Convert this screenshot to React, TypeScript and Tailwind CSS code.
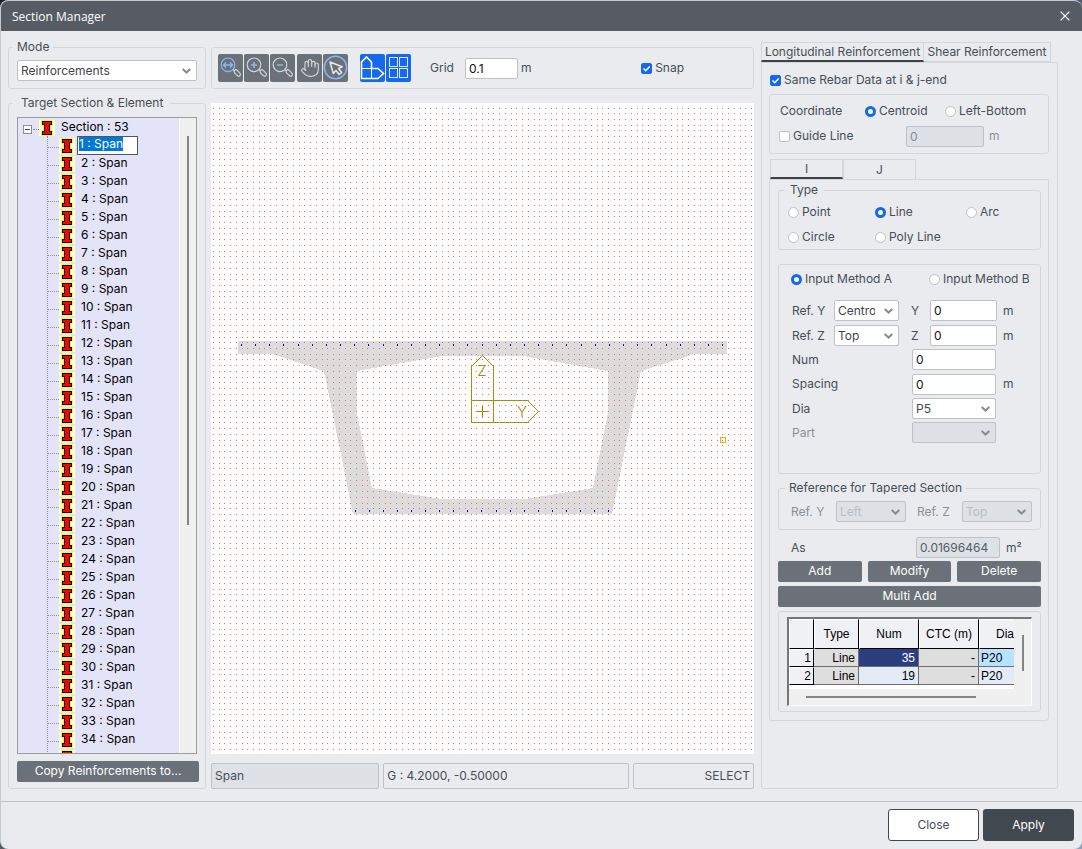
import { useState } from 'react';
import type { ReactNode } from 'react';
import clsx from 'clsx';
import { Hand, X } from 'lucide-react';

const SPAN_COUNT = 34;

// Canvas scale: pixels for one 0.1 m grid step
const GRID_STEP = 5.726;
const VIEW = { x: -271, y: -308, width: 543, height: 651 };

function buildGridPath() {
  let d = '';
  for (let i = -47; i <= 47; i++) {
    for (let j = -53; j <= 59; j++) {
      d += `M${Math.round(i * GRID_STEP)} ${Math.round(j * GRID_STEP)}h1v1h-1z`;
    }
  }
  return d;
}

const GRID_PATH = buildGridPath();

const REBARS = [
  ...Array.from({ length: 35 }, (_, i) => ({ x: Math.round(-241 + i * 14.15), y: -67 })),
  ...Array.from({ length: 19 }, (_, i) => ({ x: Math.round(-127 + i * 14.05), y: 99 })),
];

const BOX = 'rounded-[3px] border border-[#d3d6da]';

interface GroupProps {
  title: string;
  className?: string;
  legendClassName?: string;
  children: ReactNode;
}

function Group({ title, className, legendClassName, children }: GroupProps) {
  return (
    <fieldset className={clsx(BOX, 'min-w-0', className)}>
      <legend className={clsx('h-5 leading-5', legendClassName)}>{title}</legend>
      {children}
    </fieldset>
  );
}

interface SelectProps {
  label: string;
  options: string[];
  className?: string;
  disabled?: boolean;
}

function Select({ label, options, className, disabled }: SelectProps) {
  return (
    <div className={clsx('grid items-center', className)}>
      <select
        aria-label={label}
        disabled={disabled}
        className="col-start-1 row-start-1 h-[21px] w-full appearance-none rounded-[2px] border border-[#bcc2c8] bg-white pr-[23px] pl-[3px] leading-[19px] text-[#3f464d] disabled:bg-[#dee1e5] disabled:text-[#b9bec4] disabled:opacity-100"
      >
        {options.map((o) => (
          <option key={o}>{o}</option>
        ))}
      </select>
      <svg className="pointer-events-none col-start-1 row-start-1 mr-[5px] justify-self-end" width="11" height="8" viewBox="0 0 11 8" fill="none">
        <path d="M1.7 2l3.8 3.6L9.3 2" stroke="#868d94" strokeWidth="2" />
      </svg>
    </div>
  );
}

interface TextBoxProps {
  label: string;
  value: string;
  className?: string;
  disabled?: boolean;
  readOnly?: boolean;
}

function TextBox({ label, value, className, disabled, readOnly }: TextBoxProps) {
  return (
    <input
      type="text"
      aria-label={label}
      defaultValue={value}
      disabled={disabled}
      readOnly={readOnly}
      className={clsx(
        'h-[21px] min-w-0 rounded-[2px] border border-[#bcc2c8] px-[3px]',
        disabled && 'bg-[#dee1e5] text-[#868d94]',
        readOnly && 'bg-[#dee1e5] text-[#555c64]',
        !disabled && !readOnly && 'bg-white text-[#111]',
        className
      )}
    />
  );
}

interface RadioProps {
  name: string;
  label: string;
  defaultChecked?: boolean;
  className?: string;
}

function Radio({ name, label, defaultChecked, className }: RadioProps) {
  return (
    <label className={clsx('flex items-center gap-[3px] whitespace-nowrap', className)}>
      <input
        type="radio"
        name={name}
        defaultChecked={defaultChecked}
        className="size-[11px] shrink-0 appearance-none rounded-full border border-[#bcc2c8] bg-white checked:border-[3px] checked:border-[#1668ec]"
      />
      {label}
    </label>
  );
}

interface CheckProps {
  label: string;
  defaultChecked?: boolean;
  className?: string;
}

function Check({ label, defaultChecked, className }: CheckProps) {
  return (
    <label className={clsx('flex items-center gap-[3px] whitespace-nowrap', className)}>
      <span className="grid shrink-0 place-items-center">
        <input
          type="checkbox"
          defaultChecked={defaultChecked}
          className="peer col-start-1 row-start-1 size-[11px] appearance-none rounded-[2px] border border-[#bcc2c8] bg-white checked:border-[#1668ec] checked:bg-[#1668ec]"
        />
        <svg className="pointer-events-none invisible col-start-1 row-start-1 peer-checked:visible" width="9" height="9" viewBox="0 0 9 9" fill="none">
          <path d="M1.5 4.5l2.2 2.2L7.7 2.5" stroke="#fff" strokeWidth="1.6" />
        </svg>
      </span>
      {label}
    </label>
  );
}

function BeamIcon() {
  return (
    <span className="flex h-4 w-4 shrink-0 justify-center bg-white">
      <svg width="12" height="16" viewBox="0 0 12 16" shapeRendering="crispEdges">
        <path d="M0 0h12v6h-2v4h2v6H0v-6h2V6H0z" fill="#ffff00" />
        <path d="M1 1h10v4H9v6h2v4H1v-4h2V5H1z" fill="#000" />
        <path d="M2 2h8v2H8v8h2v2H2v-2h2V4H2z" fill="#ff0000" />
      </svg>
    </span>
  );
}

function MagnifierIcon({ kind }: { kind: 'fit' | 'in' | 'out' }) {
  return (
    <svg width="25" height="28" viewBox="0 0 25 28" fill="none" stroke="#d0d4d8" strokeWidth="1.2">
      <circle cx="10" cy="10.800" r="6.800" stroke={kind === 'fit' ? '#8db4f0' : '#d0d4d8'} />
      <path d="M15 15.500l1.500 1.500" />
      <rect x="15.500" y="17.200" width="7.500" height="3.600" rx="1.800" transform="rotate(45 19.250 19)" />
      {kind === 'fit' && <path d="M5.500 11h9M8 8.500L5.500 11 8 13.500M12 8.500l2.500 2.500-2.500 2.500" stroke="#8db4f0" strokeWidth="1.500" />}
      {kind === 'in' && <path d="M7 11h6M10 8v6" stroke="#8db4f0" strokeWidth="1.600" />}
      {kind === 'out' && <path d="M7 11h6" stroke="#8db4f0" strokeWidth="1.600" />}
    </svg>
  );
}

function PointerIcon() {
  return (
    <svg width="25" height="28" viewBox="0 0 25 28" fill="none">
      <circle cx="12.500" cy="13.500" r="11.200" stroke="#8db4f0" strokeWidth="1.500" />
      <path d="M7 8l3.300 11.500 2.700-3 3.200 4 2.500-2-3.200-4 3.700-1.700z" stroke="#e6e8ea" strokeWidth="1.500" strokeLinejoin="round" />
    </svg>
  );
}

function AxisIcon() {
  return (
    <svg width="25" height="28" viewBox="0 0 25 28" fill="none" stroke="#fff">
      <path d="M1.500 24.500V8l5-5 5 5v6.500H18l5.500 5-5.500 5z" strokeWidth="1.600" />
      <path d="M1.500 14.500h10v10" strokeWidth="1" />
    </svg>
  );
}

function GridIcon() {
  return (
    <svg width="25" height="28" viewBox="0 0 25 28" fill="none" stroke="#dbe7fd" strokeWidth="1">
      <rect x="3.500" y="3.500" width="8" height="9" />
      <rect x="13.500" y="3.500" width="8" height="9" />
      <rect x="3.500" y="14.500" width="8" height="9" />
      <rect x="13.500" y="14.500" width="8" height="9" />
    </svg>
  );
}

function ToolButton({ label, active, children }: { label: string; active?: boolean; children: ReactNode }) {
  return (
    <button
      type="button"
      aria-label={label}
      className={clsx('flex h-7 w-[25px] items-center justify-center rounded-[2px]', active ? 'bg-[#1668ec]' : 'bg-[#6a7178]')}
    >
      {children}
    </button>
  );
}

function ActionButton({ children, className }: { children: ReactNode; className?: string }) {
  return (
    <button type="button" className={clsx('h-[21px] rounded-[2px] bg-[#6a7178] pb-px text-white', className)}>
      {children}
    </button>
  );
}

function ElementTree() {
  return (
    <div className="mr-0.5 flex min-h-0 flex-1 basis-0 overflow-hidden border border-[#9c9c9c] bg-[#e4e4f8] text-black">
      <div className="min-w-0 flex-1 pl-[5px]">
        <div className="flex h-[18px] items-center">
          <button type="button" aria-label="Collapse" className="mt-1 flex size-[9px] items-center justify-center border border-[#919191] bg-white">
            <span className="h-px w-[5px] bg-[#31479b]" />
          </button>
          <span className="mt-1 ml-px w-[6px] border-t border-dotted border-[#909090]" />
          <span className="pt-0.5">
            <BeamIcon />
          </span>
          <span className="pl-[6px] leading-[18px]">Section : 53</span>
        </div>
        <ul className="ml-6 border-l border-dotted border-[#909090]">
          {Array.from({ length: SPAN_COUNT }, (_, i) => (
            <li key={i} className="flex h-[18px] items-center">
              <span className="mt-1 w-[11px] border-t border-dotted border-[#909090]" />
              <span className="pt-0.5">
                <BeamIcon />
              </span>
              {i === 0 ? (
                <input
                  type="text"
                  aria-label="Element name"
                  autoFocus
                  onFocus={(e) => e.target.select()}
                  defaultValue="1 : Span"
                  className="ml-0.5 h-[19px] w-[61px] shrink-0 border border-[#555] bg-white px-px pb-[3px] leading-4 outline-none selection:bg-[#0078d7] selection:text-white"
                />
              ) : (
                <span className="pl-1.5 leading-[18px] whitespace-nowrap">{i + 1} : Span</span>
              )}
            </li>
          ))}
          <li className="h-[18px] pt-0.5 pl-[11px]">
            <BeamIcon />
          </li>
        </ul>
      </div>
      <div className="w-[17px] shrink-0 border-l border-white bg-[#f0f0f0] pt-[18px]">
        <div className="mx-auto h-[63%] w-0.5 bg-[#858585]" />
      </div>
    </div>
  );
}

function SectionCanvas() {
  return (
    <div className="min-h-0 flex-1 basis-0 bg-white">
      <svg
        className="block h-full w-full"
        viewBox={`${VIEW.x} ${VIEW.y} ${VIEW.width} ${VIEW.height}`}
        preserveAspectRatio="xMidYMid slice"
        shapeRendering="crispEdges"
      >
        <path
          fillRule="evenodd"
          fill="#dcdcdc"
          d="M-244-70H245V-57H213L159-40L130 103H-129L-158-40L-210-57H-244z M-40-55L-125-40V2L-110 77L-40 88H43L111 77L126 2V-40L41-55z"
        />
        {/* local axes */}
        <g fill="none" stroke="#999100">
          <path d="M-10.500 11.500V-44.500L.5-55.500L11.500-44.500V11.500" />
          <path d="M-10.500-10.500H45.500L56.500.5L45.500 11.500H-10.500" />
          <path d="M-5 .5H6M.5-5V6" />
        </g>
        <g fill="#999100" fontFamily="Inter, sans-serif" fontWeight="300" fontSize="15" textAnchor="middle">
          <text x="0" y="-35">Z</text>
          <text x="40" y="6">Y</text>
        </g>
        <path d={GRID_PATH} fill="#f46a6a" />
        {REBARS.map((r) => (
          <rect key={`${r.x},${r.y}`} x={r.x} y={r.y} width="1" height="2" fill="#0000e0" />
        ))}
        <rect x="238.500" y="26.500" width="5" height="5" fill="none" stroke="#ffaa00" />
      </svg>
    </div>
  );
}

const ROWS = [
  { type: 'Line', num: 35, ctc: '-', dia: 'P20' },
  { type: 'Line', num: 19, ctc: '-', dia: 'P20' },
];

function RebarTable() {
  const [selected, setSelected] = useState(0);
  const head = 'border border-t-white border-r-black border-b-black border-l-white bg-[#f0f1f5] p-0 font-normal';
  const cell = 'border-r border-b border-[#6e6e6e] p-0';

  return (
    <div className="border-t-2 border-r border-b border-l-2 border-t-[#777] border-r-white border-b-white border-l-[#777] bg-[#f0f0f0] font-['Liberation_Sans',Arial,sans-serif] text-black">
      <div className="flex">
        <div className="min-w-0 flex-1 overflow-hidden bg-white pb-1">
          <table className="w-[242px] table-fixed border-separate border-spacing-0">
            <colgroup>
              <col className="w-[25px]" />
              <col className="w-[45px]" />
              <col className="w-[60px]" />
              <col className="w-[60px]" />
              <col className="w-[52px]" />
            </colgroup>
            <thead>
              <tr className="h-[30px]">
                <th className={head} aria-label="Row" />
                <th className={head}>Type</th>
                <th className={head}>Num</th>
                <th className={head}>CTC (m)</th>
                <th className={head}>Dia</th>
              </tr>
            </thead>
            <tbody>
              {ROWS.map((row, i) => (
                <tr key={i} className="h-[18px] text-right leading-4" onClick={() => setSelected(i)}>
                  <th className={clsx(head, 'pr-0.5 text-right')}>{i + 1}</th>
                  <td className={clsx(cell, 'bg-[#dedede] pr-[3px]')}>{row.type}</td>
                  <td className={clsx(cell, 'pr-[3px]', i === selected ? 'bg-[#2b3f80] text-white' : 'bg-[#e3ebf7]')}>{row.num}</td>
                  <td className={clsx(cell, 'bg-[#dedede] pr-[3px]')}>{row.ctc}</td>
                  <td className={clsx(cell, 'pl-0.5 text-left', i === selected ? 'bg-[#b8e2ff]' : 'bg-[#e3ebf7]')}>{row.dia}</td>
                </tr>
              ))}
            </tbody>
          </table>
        </div>
        <div className="w-[17px] shrink-0 pt-4">
          <div className="mx-auto h-9 w-0.5 bg-[#858585]" />
        </div>
      </div>
      <div className="flex h-4 items-center pr-[55px] pl-[17px]">
        <div className="h-0.5 flex-1 bg-[#858585]" />
      </div>
    </div>
  );
}

function ReinforcementPanel() {
  const [end, setEnd] = useState('I');

  return (
    <div className="flex w-[297px] shrink-0 flex-col">
      <div role="tablist" className="mt-[5px] flex h-5">
        <button type="button" role="tab" aria-selected="true" className="w-[163px] border border-b-2 border-[#d3d6da] border-b-[#3c4248] whitespace-nowrap">
          Longitudinal Reinforcement
        </button>
        <button type="button" role="tab" aria-selected="false" className="w-[127px] border border-l-0 border-[#d3d6da] whitespace-nowrap">
          Shear Reinforcement
        </button>
      </div>
      <div className="flex-1 rounded-b-[3px] border border-[#d3d6da] pr-2 pl-[7px]">
        <Check label="Same Rebar Data at i & j-end" defaultChecked className="mt-[7px] h-5 pl-px" />

        <div className={clsx(BOX, 'mt-1 h-[60px] pt-1.5 pl-[10px]')}>
          <div className="flex h-5 items-center">
            <span className="w-[85px]">Coordinate</span>
            <Radio name="coordinate" label="Centroid" defaultChecked className="w-20" />
            <Radio name="coordinate" label="Left-Bottom" />
          </div>
          <div className="mt-[5px] -ml-px flex h-5 items-center">
            <Check label="Guide Line" className="w-[127px]" />
            <TextBox label="Guide line position" value="0" disabled className="w-[78px]" />
            <span className="pl-[5px] text-[#8a9097]">m</span>
          </div>
        </div>

        <div role="tablist" className="mt-[5px] ml-px flex h-5">
          {['I', 'J'].map((t) => (
            <button
              key={t}
              type="button"
              role="tab"
              aria-selected={end === t}
              onClick={() => setEnd(t)}
              className={clsx('w-[73px] border border-b-0 border-[#d3d6da]', end === t && 'border-b-2 border-b-[#3c4248]')}
            >
              {t}
            </button>
          ))}
        </div>
        <div className={clsx(BOX, 'rounded-t-none pr-[7px] pb-2 pl-2')}>
          <Group title="Type" legendClassName="-ml-1 px-1.5" className="h-[70px] pl-[9px]">
            <div className="mt-0.5 grid grid-cols-[87px_91px_1fr] gap-y-[5px] leading-5">
              <Radio name="type" label="Point" />
              <Radio name="type" label="Line" defaultChecked />
              <Radio name="type" label="Arc" />
              <Radio name="type" label="Circle" />
              <Radio name="type" label="Poly Line" />
            </div>
          </Group>

          <div className={clsx(BOX, 'mt-[14px] h-[210px] pt-1 pl-3')}>
            <div className="flex h-5 items-center">
              <Radio name="method" label="Input Method A" defaultChecked className="w-[138px]" />
              <Radio name="method" label="Input Method B" />
            </div>
            <div className="mt-[11px] flex flex-col gap-1 pl-px">
              {[
                { axis: 'Y', options: ['Centroid', 'Left', 'Right'] },
                { axis: 'Z', options: ['Top', 'Centroid', 'Bottom'] },
              ].map(({ axis, options }) => (
                <div key={axis} className="flex h-[21px] items-center">
                  <span className="w-[42px]">Ref. {axis}</span>
                  <Select label={`Ref. ${axis}`} options={options} className="w-[65px]" />
                  <span className="w-[31px] pl-3">{axis}</span>
                  <TextBox label={axis} value="0" className="w-[67px]" />
                  <span className="pl-1.5">m</span>
                </div>
              ))}
            </div>
            <div className="mt-[3px] flex flex-col gap-[3px] pl-px">
              <div className="flex h-[21px] items-center">
                <span className="w-[120px]">Num</span>
                <TextBox label="Num" value="0" className="w-[84px]" />
              </div>
              <div className="flex h-[22px] items-center">
                <span className="w-[120px]">Spacing</span>
                <TextBox label="Spacing" value="0" className="w-[84px]" />
                <span className="pl-[7px]">m</span>
              </div>
              <div className="flex h-[21px] items-center">
                <span className="w-[120px]">Dia</span>
                <Select label="Dia" options={['P5', 'P20']} className="w-[84px]" />
              </div>
              <div className="flex h-[21px] items-center">
                <span className="w-[120px] text-[#8a9097]">Part</span>
                <Select label="Part" options={['']} disabled className="w-[84px]" />
              </div>
            </div>
          </div>

          <Group title="Reference for Tapered Section" legendClassName="-ml-1.5 px-1" className="mt-1 h-[52px] pl-3">
            <div className="mt-[3px] flex h-[21px] items-center text-[#8a9097]">
              <span className="w-[45px]">Ref. Y</span>
              <Select label="Tapered Ref. Y" options={['Left']} disabled className="w-[70px]" />
              <span className="w-14 pl-[11px]">Ref. Z</span>
              <Select label="Tapered Ref. Z" options={['Top']} disabled className="w-[70px]" />
            </div>
          </Group>

          <div className="mt-[7px] flex h-[21px] items-center pl-[13px]">
            <span className="w-[125px]">As</span>
            <TextBox label="As" value="0.01696464" readOnly className="w-[84px]" />
            <span className="pl-1.5">m²</span>
          </div>

          <div className="mt-[3px] grid grid-cols-3 gap-x-1.5 gap-y-1">
            <ActionButton>Add</ActionButton>
            <ActionButton>Modify</ActionButton>
            <ActionButton>Delete</ActionButton>
            <ActionButton className="col-span-3">Multi Add</ActionButton>
          </div>

          <div className={clsx(BOX, 'mt-1 px-2 py-[5px]')}>
            <RebarTable />
          </div>
        </div>
      </div>
    </div>
  );
}

export default function App() {
  return (
    <div className="h-screen min-h-[840px] min-w-[960px] bg-linear-to-br from-[#1d1f22] to-[#86a5c4] font-['Inter',sans-serif] text-xs text-[#474e56]">
      <div className="flex h-full flex-col overflow-hidden rounded-lg border-t border-l border-[#c6c9cd] bg-[#e9ebef]">
        <header className="flex h-[30px] shrink-0 items-center justify-between bg-[#555c64] pr-[9px] pl-[11px] text-white">
          <h1 className="pt-0.5 font-['Open_Sans',sans-serif] text-xs">Section Manager</h1>
          <button type="button" aria-label="Close window">
            <X size={16} strokeWidth={1.6} />
          </button>
        </header>

        <main className="flex min-h-0 flex-1 pt-1.5 pr-6 pb-3 pl-[7px]">
          <div className="flex w-[198px] shrink-0 flex-col gap-1">
            <Group title="Mode" legendClassName="-ml-1 px-1" className="h-[52px] px-2">
              <Select label="Mode" options={['Reinforcements', 'Section Data']} className="mt-[3px] w-[180px]" />
            </Group>
            <Group title="Target Section & Element" legendClassName="-ml-1 px-2" className="flex min-h-0 flex-1 flex-col pt-1 pr-1.5 pb-1.5 pl-2">
              <ElementTree />
              <ActionButton className="mt-[7px] shrink-0">Copy Reinforcements to...</ActionButton>
            </Group>
          </div>

          <div className="mr-[7px] ml-[5px] flex min-w-0 flex-1 flex-col pt-[10px]">
            <div className={clsx(BOX, 'flex h-[42px] shrink-0 items-center pl-1.5')}>
              <div className="flex gap-px">
                <ToolButton label="Zoom fit"><MagnifierIcon kind="fit" /></ToolButton>
                <ToolButton label="Zoom in"><MagnifierIcon kind="in" /></ToolButton>
                <ToolButton label="Zoom out"><MagnifierIcon kind="out" /></ToolButton>
              </div>
              <div className="ml-0.5 flex gap-px">
                <ToolButton label="Pan"><Hand size={20} strokeWidth={1.4} color="#d0d4d8" /></ToolButton>
                <ToolButton label="Select"><PointerIcon /></ToolButton>
              </div>
              <div className="ml-3 flex gap-px">
                <ToolButton label="Show axes" active><AxisIcon /></ToolButton>
                <ToolButton label="Show grid" active><GridIcon /></ToolButton>
              </div>
              <span className="ml-[19px] w-[35px]">Grid</span>
              <TextBox label="Grid" value="0.1" className="w-[53px]" />
              <span className="pl-[3px]">m</span>
              <Check label="Snap" defaultChecked className="mr-[69px] ml-auto" />
            </div>
            <div className="mt-[14px] flex min-h-0 flex-1 flex-col">
              <SectionCanvas />
            </div>
            <div className="mt-[9px] grid h-[26px] shrink-0 grid-cols-[168fr_245fr_121fr] gap-1 leading-[23px]">
              <div className="rounded-[2px] border border-[#bcc2c8] bg-[#dee1e5] px-[3px]">Span</div>
              <div className="rounded-[2px] border border-[#bcc2c8] px-[3px]">G : 4.2000, -0.50000</div>
              <div className="rounded-[2px] border border-[#bcc2c8] px-[3px] text-right">SELECT</div>
            </div>
          </div>

          <ReinforcementPanel />
        </main>

        <footer className="flex h-12 shrink-0 justify-end gap-1 border-t border-[#bfc3c7] pt-[7px] pr-2">
          <button type="button" className="h-8 w-[91px] rounded-[3px] border border-[#42484f] bg-white">Close</button>
          <button type="button" className="h-8 w-[91px] rounded-[3px] bg-[#42484f] text-white">Apply</button>
        </footer>
      </div>
    </div>
  );
}
